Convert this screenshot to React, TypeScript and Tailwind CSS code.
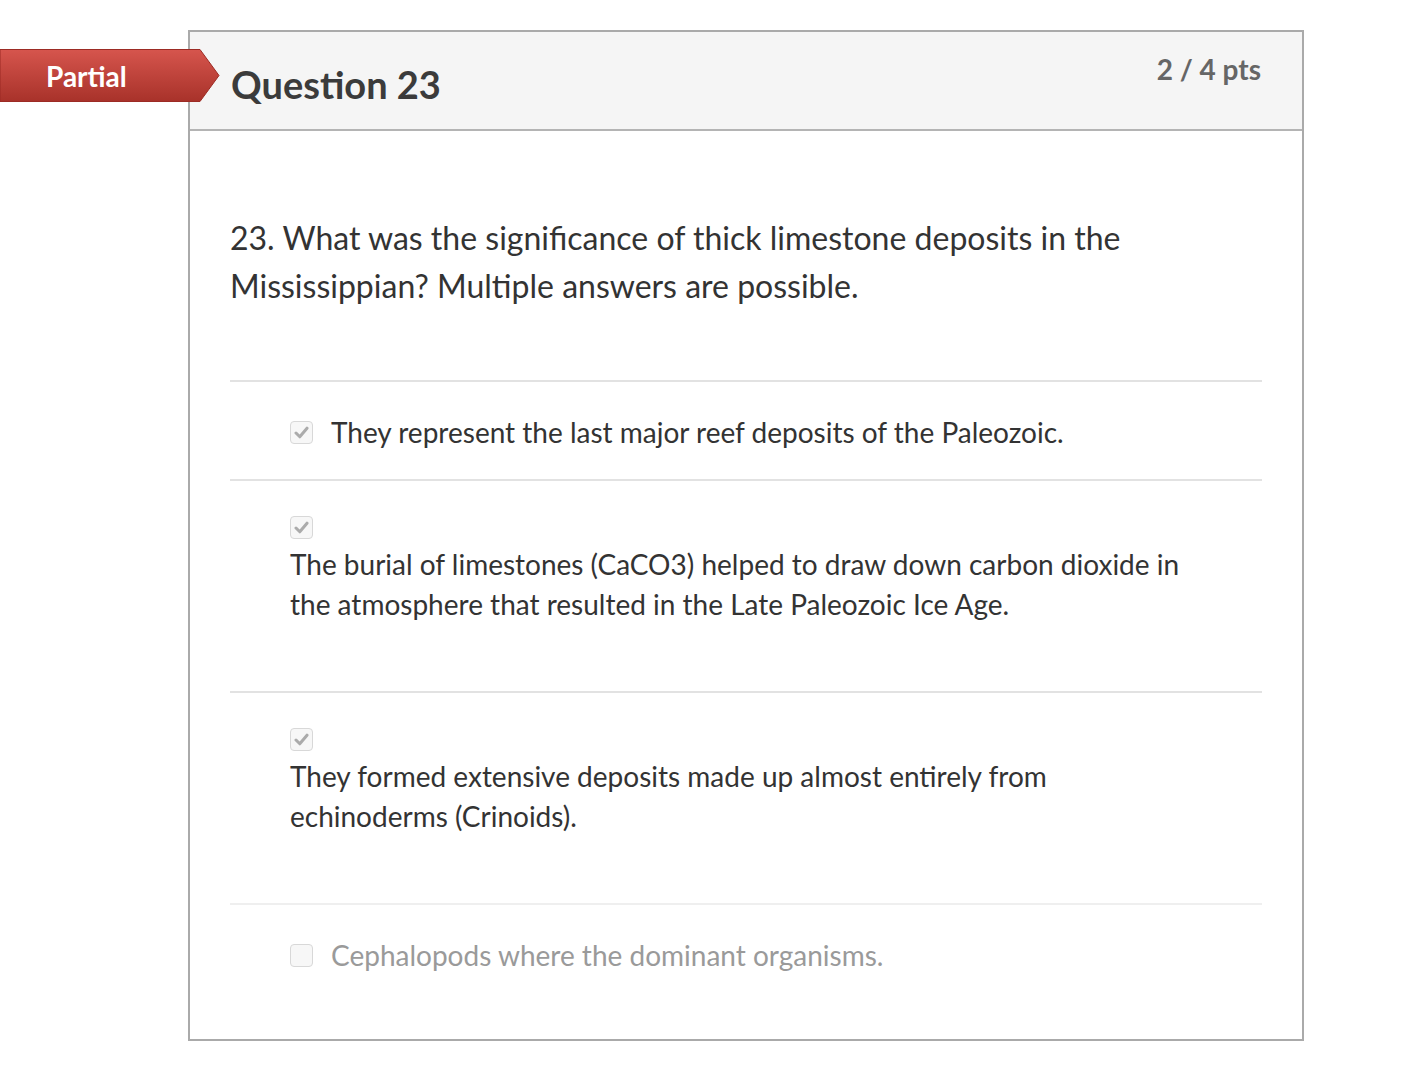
import React from "react";

function Check({ checked }: { checked: boolean }) {
  return (
    <span className="flex h-[23px] w-[23px] shrink-0 items-center justify-center rounded-[4px] border border-[#d8d8d8] bg-[#f7f7f7]">
      {checked && (
        <svg width="15" height="13" viewBox="0 0 15 13">
          <path d="M2 7 L5.8 10.8 L13 2.2" fill="none" stroke="#ababab" strokeWidth="3" strokeLinecap="round" strokeLinejoin="round" />
        </svg>
      )}
    </span>
  );
}

export default function App() {
  return (
    <div className="relative min-h-[1066px] bg-white pl-[188px] pt-[30px]" style={{ fontFamily: "Lato, 'Open Sans', sans-serif" }}>
      {/* Partial ribbon */}
      <div className="absolute left-0 top-[49px] h-[53px] w-[220px]">
        <svg width="220" height="53" viewBox="0 0 220 53" className="absolute inset-0">
          <defs>
            <linearGradient id="rg" x1="0" y1="0" x2="0" y2="1">
              <stop offset="0" stopColor="#d6554d" />
              <stop offset="1" stopColor="#a8322a" />
            </linearGradient>
          </defs>
          <path d="M0 0.5 H200 L219 26.5 L200 52.5 H0 Z" fill="url(#rg)" stroke="#9c2b24" strokeWidth="1" />
        </svg>
        <span className="absolute left-[46px] top-[11px] text-[28px] font-bold leading-[32px] text-white">Partial</span>
      </div>

      <div className="w-[1116px] border-2 border-[#aaaaaa]">
        <div className="flex h-[99px] items-start justify-between border-b-2 border-[#b4b4b4] bg-[#f5f5f5] pl-[41px] pr-[41px]">
          <div className="pt-[30px] text-[38px] font-bold leading-[44px] text-[#3b3b3b]">Question 23</div>
          <div className="pt-[19px] text-[28px] font-bold leading-[36px] text-[#666666]">2 / 4 pts</div>
        </div>

        <div className="px-[40px]">
          <div className="pt-[83px] pb-[70px] text-[32px] leading-[48px] text-[#333333]">
            <p>23. What was the significance of thick limestone deposits in the</p>
            <p>Mississippian? Multiple answers are possible.</p>
          </div>

          <div className="border-t-2 border-[#e2e2e2] pl-[60px] pt-[30px] pb-[27px] text-[28px] leading-[40px] text-[#333333]">
            <div className="flex items-center gap-[18px]">
              <Check checked />
              <span>They represent the last major reef deposits of the Paleozoic.</span>
            </div>
          </div>

          <div className="border-t-2 border-[#e2e2e2] pl-[60px] pt-[35px] pb-[67px] text-[28px] leading-[40px] text-[#333333]">
            <Check checked />
            <div className="mt-[5px]">
              <p>The burial of limestones (CaCO3) helped to draw down carbon dioxide in</p>
              <p>the atmosphere that resulted in the Late Paleozoic Ice Age.</p>
            </div>
          </div>

          <div className="border-t-2 border-[#e2e2e2] pl-[60px] pt-[35px] pb-[67px] text-[28px] leading-[40px] text-[#333333]">
            <Check checked />
            <div className="mt-[5px]">
              <p>They formed extensive deposits made up almost entirely from</p>
              <p>echinoderms (Crinoids).</p>
            </div>
          </div>

          <div className="border-t-2 border-[#efefef] pl-[60px] pt-[30px] pb-[64px] text-[28px] leading-[40px] text-[#9a9a9a]">
            <div className="flex items-center gap-[18px]">
              <Check checked={false} />
              <span>Cephalopods where the dominant organisms.</span>
            </div>
          </div>
        </div>
      </div>
    </div>
  );
}
